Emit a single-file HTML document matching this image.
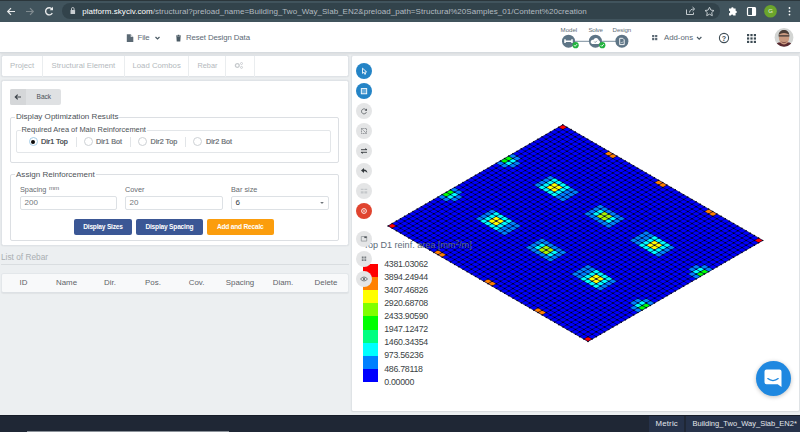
<!DOCTYPE html>
<html><head><meta charset="utf-8"><title>SkyCiv</title>
<style>
*{box-sizing:border-box;margin:0;padding:0}
html,body{width:800px;height:432px;overflow:hidden;background:#eceff1;font-family:"Liberation Sans",sans-serif;}
.a{position:absolute}
.t{position:absolute;white-space:nowrap;line-height:1}
#chrome{left:0;top:0;width:800px;height:22px;background:#41545d}
#chrometop{left:0;top:0;width:800px;height:1.3px;background:#2b363b}
#urlbar{left:62px;top:2.8px;width:658px;height:16.4px;border-radius:8.2px;background:#32434b}
#hdr{left:0;top:21.6px;width:800px;height:31.2px;background:#fff;border-bottom:1px solid #d6dbdf;box-shadow:0 1px 2px rgba(0,0,0,.09)}
.card{background:#fff;border:1px solid #dfe3e7;border-radius:2.5px;box-shadow:0 0 1.5px rgba(0,0,0,.10)}
.tab{color:#b4b9bd;font-size:7.75px;top:62px}
.sep{width:1px;top:55.5px;height:21px;background:#eaedef}
.fs{border:1px solid #dcdfe3;border-radius:2px}
.lg{background:#fff;color:#4d5257;font-size:8.05px;padding:0 1px}
.rad{width:9px;height:9px;border:1px solid #cdd1d5;border-radius:50%;background:#fff}
.rl{font-size:7.2px;color:#666b70;top:138px;-webkit-text-stroke:.2px #666b70}
.inp{height:14px;border:1px solid #dde1e5;border-radius:2px;background:#fff;top:195.5px;width:97px}
.lbl{font-size:7.3px;color:#666b70;top:186px}
.val{font-size:8px;color:#72777c;top:199px}
.btn{top:219px;height:16px;border-radius:2px;color:#fff;font-size:6.6px;font-weight:bold;text-align:center;line-height:16.5px;letter-spacing:-0.2px}
.th{font-size:7.9px;color:#5f6469;top:279.3px;transform:translateX(-50%)}
.ic{left:355.7px;width:16px;height:16px;border-radius:50%;background:#e4e5e6}
.lv{font-size:8.8px;letter-spacing:-.27px;color:#3a3f44;left:384.2px}
</style></head><body>

<!-- browser chrome -->
<div class="a" id="chrome"></div>
<div class="a" id="chrometop"></div>
<div class="a" id="urlbar"></div>
<svg class="a" style="left:0;top:0" width="800" height="21" viewBox="0 0 800 21">
 <g fill="none" stroke="#e8eaeb" stroke-width="1.2">
  <path d="M15 11.5H8M11 8.2L7.7 11.5L11 14.8"/>
  <path d="M26 11.5H33M30 8.2L33.3 11.5L30 14.8" stroke="#7f8a8f"/>
  <path d="M52 9A3.6 3.6 0 1 0 52.3 13.2" stroke-width="1.4"/>
 </g>
 <path d="M53 6.8V10.2H49.6Z" fill="#e8eaeb"/>
 <rect x="70.5" y="10" width="4.6" height="4" rx=".6" fill="#c9ced1"/>
 <path d="M71.5 10V8.8a1.3 1.3 0 0 1 2.6 0V10" fill="none" stroke="#c9ced1" stroke-width=".9"/>
 <!-- right icons -->
 <g fill="none" stroke="#c3cbcf" stroke-width="1">
  <path d="M686.5 9.5V14.5H693.5V12.5M689.5 12.5C689.8 10 691.5 9 694 9M692.5 7L694.7 9L692.5 11"/>
  <path d="M709.5 7.2L710.9 10.1L714 10.5L711.7 12.6L712.3 15.7L709.5 14.2L706.7 15.7L707.3 12.6L705 10.5L708.1 10.1Z"/>
 </g>
 <path d="M729 8.5h2.2a1.2 1.2 0 0 1 2.4 0h2v2.2a1.2 1.2 0 0 1 0 2.4v2.4h-2.4a1.1 1.1 0 0 0-2.2 0H729v-2.3a1.2 1.2 0 0 0 0-2.4Z" fill="#fff"/>
 <rect x="747.5" y="7.5" width="8" height="8" rx="1" fill="none" stroke="#fff" stroke-width="1.2"/>
 <rect x="752" y="7.5" width="3.5" height="8" fill="#fff"/>
 <circle cx="770.5" cy="11.2" r="6.3" fill="#6ba52c"/>
 <text x="770.5" y="13.3" font-family="Liberation Sans" font-size="6" fill="#e6f0dc" text-anchor="middle">G</text>
 <circle cx="789.5" cy="8" r=".9" fill="#fff"/><circle cx="789.5" cy="11.3" r=".9" fill="#fff"/><circle cx="789.5" cy="14.6" r=".9" fill="#fff"/>
</svg>
<div class="t" style="left:82.3px;top:7.5px;font-size:8px;color:#b2bbc0;letter-spacing:.04px"><span style="color:#fff">platform.skyciv.com</span>/structural?preload_name=Building_Two_Way_Slab_EN2&amp;preload_path=Structural%20Samples_01/Content%20creation</div>

<!-- app header -->
<div class="a" id="hdr"></div>
<svg class="a" style="left:0;top:21px" width="800" height="31" viewBox="0 21 800 31">
 <!-- file icon -->
 <path d="M126.800 34.300h3.900l2.600 2.600v5h-6.500Z" fill="#5b6974"/><path d="M130.700 34.300v2.600h2.600Z" fill="#fff" opacity=".75"/>
 <path d="M155.5 37l2 2 2-2" fill="none" stroke="#4a5a64" stroke-width="1.2"/>
 <!-- trash -->
 <path d="M176 35.5h5v.9h-5zM177.7 34.7h1.6v.8h-1.6zM176.4 36.8h4.2l-.3 4.6h-3.6z" fill="#4a5a64"/>
 <!-- model / solve / design -->
 <path d="M569 41.300h53" stroke="#6b8091" stroke-width=".9"/>
 <circle cx="568.500" cy="41.200" r="6.500" fill="#5e7586"/><circle cx="595.400" cy="41.200" r="6.500" fill="#5e7586"/><circle cx="621.900" cy="41.200" r="6.500" fill="#5e7586"/>
 <path d="M565 39.300v3.800M572 39.300v3.800M565 41.200h7" stroke="#fff" stroke-width="1.500" fill="none"/>
 <path d="M592.200 44h6.200a1.900 1.900 0 0 0 .3-3.700a2.700 2.700 0 0 0-5.200-.5a2.100 2.100 0 0 0-1.300 4.200Z" fill="#fff"/>
 <path d="M594.300 41.600l.9.900 1.700-1.700" stroke="#5e7586" stroke-width=".7" fill="none"/>
 <path d="M619.700 38.300h3l1.500 1.500v4.800h-4.500Z" fill="none" stroke="#fff" stroke-width=".9"/>
 <path d="M621 42.300l.7.700 1.300-1.500" stroke="#fff" stroke-width=".6" fill="none"/>
 <circle cx="575.600" cy="45.200" r="3.100" fill="#22b33f"/><circle cx="602.300" cy="45.200" r="3.100" fill="#22b33f"/>
 <path d="M574 45.200l1.100 1.100 2-2.200M600.700 45.200l1.100 1.100 2-2.200" stroke="#fff" stroke-width=".9" fill="none"/>
 <!-- addons squares -->
 <g fill="#5b6974"><rect x="652.100" y="35" width="2.200" height="2.200"/><rect x="655.100" y="35" width="2.200" height="2.200"/><rect x="652.100" y="38" width="2.200" height="2.200"/><rect x="655.100" y="38" width="2.200" height="2.200"/></g>
 <path d="M697 37l2.2 2.2 2.2-2.2" fill="none" stroke="#4a5a64" stroke-width="1.2"/>
 <circle cx="724" cy="38" r="4.6" fill="none" stroke="#3e4c55" stroke-width="1.1"/>
 <text x="724" y="40.6" font-family="Liberation Sans" font-size="7.2" font-weight="bold" fill="#3e4c55" text-anchor="middle">?</text>
 <g fill="#3e4c55">
  <rect x="747" y="34" width="2.2" height="2.2"/><rect x="750.4" y="34" width="2.2" height="2.2"/><rect x="753.8" y="34" width="2.2" height="2.2"/>
  <rect x="747" y="37.4" width="2.2" height="2.2"/><rect x="750.4" y="37.4" width="2.2" height="2.2"/><rect x="753.8" y="37.4" width="2.2" height="2.2"/>
  <rect x="747" y="40.8" width="2.2" height="2.2"/><rect x="750.4" y="40.8" width="2.2" height="2.2"/><rect x="753.8" y="40.8" width="2.2" height="2.2"/>
 </g>
 <!-- avatar -->
 <clipPath id="av"><circle cx="784" cy="37.4" r="9.4"/></clipPath>
 <g clip-path="url(#av)">
  <rect x="774" y="27" width="20" height="21" fill="#d3d5d3"/>
  <path d="M774 48c.5-4.500 4-5.500 6-5.800h8c2 .3 5.500 1.300 6 5.800Z" fill="#5a2a30"/>
  <ellipse cx="784" cy="37.600" rx="5.200" ry="7" fill="#c9997f"/>
  <path d="M778.700 35.500c-.6-7.500 11.200-7.500 10.600 0c-.8-3.400-9.800-3.400-10.600 0Z" fill="#4b3d36"/>
  <path d="M781.300 41.200c1.500 1.400 4 1.400 5.400 0c-.3 2.400-5.100 2.400-5.400 0Z" fill="#7e4a44"/>
  <path d="M778.600 35.800h10.800" stroke="#3b3432" stroke-width="1.300"/>
 </g>
</svg>
<div class="t" style="left:137.6px;top:34px;font-size:7.8px;letter-spacing:-.15px;color:#5b6974">File</div>
<div class="t" style="left:186px;top:34px;font-size:7.8px;letter-spacing:-.09px;color:#5b6974">Reset Design Data</div>
<div class="t" style="left:560.6px;top:26.9px;font-size:6.1px;color:#5d6b75">Model</div>
<div class="t" style="left:588.4px;top:26.9px;font-size:6.1px;letter-spacing:-.2px;color:#5d6b75">Solve</div>
<div class="t" style="left:612.6px;top:26.9px;font-size:6.1px;letter-spacing:-.1px;color:#5d6b75">Design</div>
<div class="t" style="left:664px;top:34px;font-size:7.8px;color:#5b6974">Add-ons</div>

<!-- left panel: tabs -->
<div class="a card" style="left:1.2px;top:54.5px;width:347.4px;height:22.8px"></div>
<div class="t tab" style="left:10px">Project</div>
<div class="t tab" style="left:51.5px">Structural Element</div>
<div class="t tab" style="left:132.5px">Load Combos</div>
<div class="t tab" style="left:197.5px;font-size:7.3px;top:62.3px">Rebar</div>
<div class="a sep" style="left:42px"></div><div class="a sep" style="left:124px"></div><div class="a sep" style="left:188px"></div><div class="a sep" style="left:224.9px"></div><div class="a sep" style="left:254px"></div>
<svg class="a" style="left:234px;top:61px" width="12" height="10" viewBox="0 0 12 10">
 <circle cx="3.300" cy="4.500" r="1.900" fill="none" stroke="#c6cacd" stroke-width="1.300"/>
 <circle cx="7.500" cy="2.500" r="1" fill="none" stroke="#c6cacd" stroke-width=".9"/>
 <circle cx="7.500" cy="6.400" r="1" fill="none" stroke="#c6cacd" stroke-width=".9"/>
</svg>

<!-- main card -->
<div class="a card" style="left:1.2px;top:80px;width:347.4px;height:165.7px"></div>
<div class="a" style="left:10px;top:89px;width:50.5px;height:16px;background:#dfe1e3;border-radius:2px"></div>
<div class="a" style="left:10px;top:89px;width:16px;height:16px;background:#d5d7d9;border-radius:2px 0 0 2px"></div>
<svg class="a" style="left:14px;top:93px" width="8" height="8" viewBox="0 0 8 8"><path d="M7 4H1.5M3.7 1.6L1.3 4L3.7 6.4" fill="none" stroke="#3e454b" stroke-width="1.2"/></svg>
<div class="t" style="left:36.5px;top:94.2px;font-size:6.6px;color:#4c5257">Back</div>

<div class="a fs" style="left:10px;top:117.1px;width:328.5px;height:46.4px"></div>
<div class="t lg" style="left:15px;top:113px">Display Optimization Results</div>
<div class="a fs" style="left:16.2px;top:130px;width:315.3px;height:22.6px;border-color:#e3e6e9"></div>
<div class="t lg" style="left:20.5px;top:125.8px;font-size:7.45px">Required Area of Main Reinforcement</div>
<div class="a rad" style="left:28.7px;top:137px;border-color:#a5cde8"></div><div class="a" style="left:31.2px;top:139.5px;width:4px;height:4px;border-radius:50%;background:#0a0a0a"></div>
<div class="a rad" style="left:83.6px;top:137px"></div>
<div class="a rad" style="left:137.8px;top:137px"></div>
<div class="a rad" style="left:193px;top:137px"></div>
<div class="t rl" style="left:41px;color:#33383c;-webkit-text-stroke:.2px #33383c">Dir1 Top</div>
<div class="t rl" style="left:96px">Dir1 Bot</div>
<div class="t rl" style="left:150.5px">Dir2 Top</div>
<div class="t rl" style="left:206px">Dir2 Bot</div>
<div class="a" style="left:76px;top:136.5px;width:1px;height:10px;background:#e2e5e8"></div>
<div class="a" style="left:130px;top:136.5px;width:1px;height:10px;background:#e2e5e8"></div>
<div class="a" style="left:185px;top:136.5px;width:1px;height:10px;background:#e2e5e8"></div>

<div class="a fs" style="left:10px;top:173.7px;width:328.5px;height:67.8px"></div>
<div class="t lg" style="left:15px;top:170.6px">Assign Reinforcement</div>
<div class="t lbl" style="left:20px">Spacing <span style="font-size:6.2px;position:relative;top:-1.7px;left:.5px">mm</span></div>
<div class="t lbl" style="left:125px">Cover</div>
<div class="t lbl" style="left:231px">Bar size</div>
<div class="a inp" style="left:20px"></div><div class="a inp" style="left:125.3px;width:97.5px"></div><div class="a inp" style="left:231.2px;width:97.5px"></div>
<div class="t val" style="left:24.5px">200</div>
<div class="t val" style="left:129.5px">20</div>
<div class="t val" style="left:235.5px;color:#33383c">6</div>
<svg class="a" style="left:319px;top:201px" width="6" height="4" viewBox="0 0 6 4"><path d="M1.2 1h3.6L3 3Z" fill="#6d7378"/></svg>
<div class="a btn" style="left:73.6px;width:58.8px;background:#3b5795">Display Sizes</div>
<div class="a btn" style="left:136.1px;width:66.6px;background:#3b5795">Display Spacing</div>
<div class="a btn" style="left:207px;width:66.5px;background:#fb9d0d">Add and Recalc</div>

<!-- list of rebar -->
<div class="t" style="left:1px;top:253.2px;font-size:8.3px;color:#a9aeb2">List of Rebar</div>
<div class="a" style="left:1px;top:264px;width:348px;height:1px;background:#d9dde0"></div>
<div class="a" style="left:1.2px;top:273.4px;width:347.8px;height:19.6px;background:#f8f9fa;border:1px solid #e3e7ea;border-bottom-color:#dde1e5;border-radius:2.5px;box-shadow:0 1px 1px rgba(0,0,0,.05)"></div>
<div class="t th" style="left:23.5px">ID</div>
<div class="t th" style="left:66.5px">Name</div>
<div class="t th" style="left:110px">Dir.</div>
<div class="t th" style="left:153px">Pos.</div>
<div class="t th" style="left:196.5px">Cov.</div>
<div class="t th" style="left:240px">Spacing</div>
<div class="t th" style="left:283px">Diam.</div>
<div class="t th" style="left:326px">Delete</div>

<!-- right canvas -->
<div class="a" style="left:351.3px;top:54.5px;width:448.6px;height:357.6px;background:#fff;border:1px solid #dfe3e6;border-top-color:#e4e7ea;border-bottom-color:#d9dcdf;border-radius:2.5px;box-shadow:0 0 1.5px rgba(0,0,0,.08)"></div>
<svg style="position:absolute;left:0;top:0" width="800" height="432" viewBox="0 0 800 432">
<polygon points="388.0,225.9 562.8,124.8 762.8,240.4 588.0,341.5" fill="#0000ff"/>
<polygon points="475.4,218.7 479.6,216.3 483.8,218.7 479.6,221.1" fill="#0080ff"/>
<polygon points="479.6,221.1 483.8,218.7 487.9,221.1 483.8,223.5" fill="#00ffff"/>
<polygon points="483.8,223.5 487.9,221.1 492.1,223.5 487.9,225.9" fill="#00ffff"/>
<polygon points="487.9,225.9 492.1,223.5 496.3,225.9 492.1,228.3" fill="#00ffff"/>
<polygon points="492.1,228.3 496.3,225.9 500.4,228.3 496.3,230.7" fill="#00ffff"/>
<polygon points="496.3,230.7 500.4,228.3 504.6,230.7 500.4,233.1" fill="#0080ff"/>
<polygon points="500.4,233.1 504.6,230.7 508.8,233.1 504.6,235.5" fill="#0080ff"/>
<polygon points="479.6,216.3 483.8,213.9 487.9,216.3 483.8,218.7" fill="#0080ff"/>
<polygon points="483.8,218.7 487.9,216.3 492.1,218.7 487.9,221.1" fill="#00ffff"/>
<polygon points="487.9,221.1 492.1,218.7 496.3,221.1 492.1,223.5" fill="#ffff00"/>
<polygon points="492.1,223.5 496.3,221.1 500.4,223.5 496.3,225.9" fill="#ffff00"/>
<polygon points="496.3,225.9 500.4,223.5 504.6,225.9 500.4,228.3" fill="#00ffff"/>
<polygon points="500.4,228.3 504.6,225.9 508.8,228.3 504.6,230.7" fill="#0080ff"/>
<polygon points="504.6,230.7 508.8,228.3 512.9,230.7 508.8,233.1" fill="#0080ff"/>
<polygon points="483.8,213.9 487.9,211.5 492.1,213.9 487.9,216.3" fill="#0080ff"/>
<polygon points="487.9,216.3 492.1,213.9 496.3,216.3 492.1,218.7" fill="#00ffff"/>
<polygon points="492.1,218.7 496.3,216.3 500.4,218.7 496.3,221.1" fill="#ffff00"/>
<polygon points="496.3,221.1 500.4,218.7 504.6,221.1 500.4,223.5" fill="#ffff00"/>
<polygon points="500.4,223.5 504.6,221.1 508.8,223.5 504.6,225.9" fill="#00ffff"/>
<polygon points="504.6,225.9 508.8,223.5 512.9,225.9 508.8,228.3" fill="#0080ff"/>
<polygon points="508.8,228.3 512.9,225.9 517.1,228.3 512.9,230.7" fill="#0080ff"/>
<polygon points="487.9,211.5 492.1,209.1 496.3,211.5 492.1,213.9" fill="#0080ff"/>
<polygon points="492.1,213.9 496.3,211.5 500.4,213.9 496.3,216.3" fill="#00ffff"/>
<polygon points="496.3,216.3 500.4,213.9 504.6,216.3 500.4,218.7" fill="#00ffff"/>
<polygon points="500.4,218.7 504.6,216.3 508.8,218.7 504.6,221.1" fill="#00ffff"/>
<polygon points="504.6,221.1 508.8,218.7 512.9,221.1 508.8,223.5" fill="#00ffff"/>
<polygon points="508.8,223.5 512.9,221.1 517.1,223.5 512.9,225.9" fill="#0080ff"/>
<polygon points="512.9,225.9 517.1,223.5 521.3,225.9 517.1,228.3" fill="#0080ff"/>
<polygon points="525.4,247.6 529.6,245.2 533.8,247.6 529.6,250.0" fill="#0080ff"/>
<polygon points="529.6,250.0 533.8,247.6 537.9,250.0 533.8,252.4" fill="#0080ff"/>
<polygon points="533.8,252.4 537.9,250.0 542.1,252.4 537.9,254.8" fill="#0080ff"/>
<polygon points="537.9,254.8 542.1,252.4 546.3,254.8 542.1,257.2" fill="#0080ff"/>
<polygon points="542.1,257.2 546.3,254.8 550.4,257.2 546.3,259.6" fill="#0080ff"/>
<polygon points="546.3,259.6 550.4,257.2 554.6,259.6 550.4,262.0" fill="#0080ff"/>
<polygon points="529.6,245.2 533.8,242.8 537.9,245.2 533.8,247.6" fill="#0080ff"/>
<polygon points="533.8,247.6 537.9,245.2 542.1,247.6 537.9,250.0" fill="#00ffff"/>
<polygon points="537.9,250.0 542.1,247.6 546.3,250.0 542.1,252.4" fill="#a8f400"/>
<polygon points="542.1,252.4 546.3,250.0 550.4,252.4 546.3,254.8" fill="#a8f400"/>
<polygon points="546.3,254.8 550.4,252.4 554.6,254.8 550.4,257.2" fill="#00ffff"/>
<polygon points="550.4,257.2 554.6,254.8 558.8,257.2 554.6,259.6" fill="#0080ff"/>
<polygon points="533.8,242.8 537.9,240.4 542.1,242.8 537.9,245.2" fill="#0080ff"/>
<polygon points="537.9,245.2 542.1,242.8 546.3,245.2 542.1,247.6" fill="#00ffff"/>
<polygon points="542.1,247.6 546.3,245.2 550.4,247.6 546.3,250.0" fill="#a8f400"/>
<polygon points="546.3,250.0 550.4,247.6 554.6,250.0 550.4,252.4" fill="#a8f400"/>
<polygon points="550.4,252.4 554.6,250.0 558.8,252.4 554.6,254.8" fill="#00ffff"/>
<polygon points="554.6,254.8 558.8,252.4 562.9,254.8 558.8,257.2" fill="#0080ff"/>
<polygon points="537.9,240.4 542.1,238.0 546.3,240.4 542.1,242.8" fill="#0080ff"/>
<polygon points="542.1,242.8 546.3,240.4 550.4,242.8 546.3,245.2" fill="#0080ff"/>
<polygon points="546.3,245.2 550.4,242.8 554.6,245.2 550.4,247.6" fill="#0080ff"/>
<polygon points="550.4,247.6 554.6,245.2 558.8,247.6 554.6,250.0" fill="#0080ff"/>
<polygon points="554.6,250.0 558.8,247.6 562.9,250.0 558.8,252.4" fill="#0080ff"/>
<polygon points="558.8,252.4 562.9,250.0 567.1,252.4 562.9,254.8" fill="#0080ff"/>
<polygon points="571.3,274.1 575.4,271.7 579.6,274.1 575.4,276.5" fill="#0080ff"/>
<polygon points="575.4,276.5 579.6,274.1 583.8,276.5 579.6,278.9" fill="#0080ff"/>
<polygon points="579.6,278.9 583.8,276.5 587.9,278.9 583.8,281.3" fill="#00ffff"/>
<polygon points="583.8,281.3 587.9,278.9 592.1,281.3 587.9,283.7" fill="#00ffff"/>
<polygon points="587.9,283.7 592.1,281.3 596.3,283.7 592.1,286.1" fill="#00ffff"/>
<polygon points="592.1,286.1 596.3,283.7 600.4,286.1 596.3,288.5" fill="#00ffff"/>
<polygon points="596.3,288.5 600.4,286.1 604.6,288.5 600.4,290.9" fill="#0080ff"/>
<polygon points="575.4,271.7 579.6,269.3 583.8,271.7 579.6,274.1" fill="#0080ff"/>
<polygon points="579.6,274.1 583.8,271.7 587.9,274.1 583.8,276.5" fill="#0080ff"/>
<polygon points="583.8,276.5 587.9,274.1 592.1,276.5 587.9,278.9" fill="#00ffff"/>
<polygon points="587.9,278.9 592.1,276.5 596.3,278.9 592.1,281.3" fill="#ffff00"/>
<polygon points="592.1,281.3 596.3,278.9 600.4,281.3 596.3,283.7" fill="#ffff00"/>
<polygon points="596.3,283.7 600.4,281.3 604.6,283.7 600.4,286.1" fill="#00ffff"/>
<polygon points="600.4,286.1 604.6,283.7 608.8,286.1 604.6,288.5" fill="#0080ff"/>
<polygon points="579.6,269.3 583.8,266.9 587.9,269.3 583.8,271.7" fill="#0080ff"/>
<polygon points="583.8,271.7 587.9,269.3 592.1,271.7 587.9,274.1" fill="#0080ff"/>
<polygon points="587.9,274.1 592.1,271.7 596.3,274.1 592.1,276.5" fill="#00ffff"/>
<polygon points="592.1,276.5 596.3,274.1 600.4,276.5 596.3,278.9" fill="#ffff00"/>
<polygon points="596.3,278.9 600.4,276.5 604.6,278.9 600.4,281.3" fill="#ffff00"/>
<polygon points="600.4,281.3 604.6,278.9 608.8,281.3 604.6,283.7" fill="#00ffff"/>
<polygon points="604.6,283.7 608.8,281.3 612.9,283.7 608.8,286.1" fill="#0080ff"/>
<polygon points="583.8,266.9 587.9,264.5 592.1,266.9 587.9,269.3" fill="#0080ff"/>
<polygon points="587.9,269.3 592.1,266.9 596.3,269.3 592.1,271.7" fill="#0080ff"/>
<polygon points="592.1,271.7 596.3,269.3 600.4,271.7 596.3,274.1" fill="#00ffff"/>
<polygon points="596.3,274.1 600.4,271.7 604.6,274.1 600.4,276.5" fill="#00ffff"/>
<polygon points="600.4,276.5 604.6,274.1 608.8,276.5 604.6,278.9" fill="#00ffff"/>
<polygon points="604.6,278.9 608.8,276.5 612.9,278.9 608.8,281.3" fill="#00ffff"/>
<polygon points="608.8,281.3 612.9,278.9 617.1,281.3 612.9,283.7" fill="#0080ff"/>
<polygon points="533.7,185.0 537.9,182.6 542.0,185.0 537.9,187.4" fill="#0080ff"/>
<polygon points="537.9,187.4 542.0,185.0 546.2,187.4 542.0,189.8" fill="#00ffff"/>
<polygon points="542.0,189.8 546.2,187.4 550.4,189.8 546.2,192.2" fill="#00ffff"/>
<polygon points="546.2,192.2 550.4,189.8 554.5,192.2 550.4,194.6" fill="#00ffff"/>
<polygon points="550.4,194.6 554.5,192.2 558.7,194.6 554.5,197.0" fill="#00ffff"/>
<polygon points="554.5,197.0 558.7,194.6 562.9,197.0 558.7,199.4" fill="#0080ff"/>
<polygon points="558.7,199.4 562.9,197.0 567.0,199.4 562.9,201.8" fill="#0080ff"/>
<polygon points="537.9,182.6 542.0,180.2 546.2,182.6 542.0,185.0" fill="#0080ff"/>
<polygon points="542.0,185.0 546.2,182.6 550.4,185.0 546.2,187.4" fill="#00ffff"/>
<polygon points="546.2,187.4 550.4,185.0 554.5,187.4 550.4,189.8" fill="#ffff00"/>
<polygon points="550.4,189.8 554.5,187.4 558.7,189.8 554.5,192.2" fill="#ffff00"/>
<polygon points="554.5,192.2 558.7,189.8 562.9,192.2 558.7,194.6" fill="#00ffff"/>
<polygon points="558.7,194.6 562.9,192.2 567.0,194.6 562.9,197.0" fill="#0080ff"/>
<polygon points="562.9,197.0 567.0,194.6 571.2,197.0 567.0,199.4" fill="#0080ff"/>
<polygon points="542.0,180.2 546.2,177.8 550.4,180.2 546.2,182.6" fill="#0080ff"/>
<polygon points="546.2,182.6 550.4,180.2 554.5,182.6 550.4,185.0" fill="#00ffff"/>
<polygon points="550.4,185.0 554.5,182.6 558.7,185.0 554.5,187.4" fill="#ffff00"/>
<polygon points="554.5,187.4 558.7,185.0 562.9,187.4 558.7,189.8" fill="#ffff00"/>
<polygon points="558.7,189.8 562.9,187.4 567.0,189.8 562.9,192.2" fill="#00ffff"/>
<polygon points="562.9,192.2 567.0,189.8 571.2,192.2 567.0,194.6" fill="#0080ff"/>
<polygon points="567.0,194.6 571.2,192.2 575.4,194.6 571.2,197.0" fill="#0080ff"/>
<polygon points="546.2,177.8 550.4,175.4 554.5,177.8 550.4,180.2" fill="#0080ff"/>
<polygon points="550.4,180.2 554.5,177.8 558.7,180.2 554.5,182.6" fill="#00ffff"/>
<polygon points="554.5,182.6 558.7,180.2 562.9,182.6 558.7,185.0" fill="#00ffff"/>
<polygon points="558.7,185.0 562.9,182.6 567.0,185.0 562.9,187.4" fill="#00ffff"/>
<polygon points="562.9,187.4 567.0,185.0 571.2,187.4 567.0,189.8" fill="#00ffff"/>
<polygon points="567.0,189.8 571.2,187.4 575.4,189.8 571.2,192.2" fill="#0080ff"/>
<polygon points="571.2,192.2 575.4,189.8 579.5,192.2 575.4,194.6" fill="#0080ff"/>
<polygon points="583.7,213.9 587.9,211.5 592.0,213.9 587.9,216.3" fill="#0080ff"/>
<polygon points="587.9,216.3 592.0,213.9 596.2,216.3 592.0,218.7" fill="#0080ff"/>
<polygon points="592.0,218.7 596.2,216.3 600.4,218.7 596.2,221.1" fill="#0080ff"/>
<polygon points="596.2,221.1 600.4,218.7 604.5,221.1 600.4,223.5" fill="#0080ff"/>
<polygon points="600.4,223.5 604.5,221.1 608.7,223.5 604.5,225.9" fill="#0080ff"/>
<polygon points="604.5,225.9 608.7,223.5 612.9,225.9 608.7,228.3" fill="#0080ff"/>
<polygon points="587.9,211.5 592.0,209.1 596.2,211.5 592.0,213.9" fill="#0080ff"/>
<polygon points="592.0,213.9 596.2,211.5 600.4,213.9 596.2,216.3" fill="#00ffff"/>
<polygon points="596.2,216.3 600.4,213.9 604.5,216.3 600.4,218.7" fill="#a8f400"/>
<polygon points="600.4,218.7 604.5,216.3 608.7,218.7 604.5,221.1" fill="#a8f400"/>
<polygon points="604.5,221.1 608.7,218.7 612.9,221.1 608.7,223.5" fill="#00ffff"/>
<polygon points="608.7,223.5 612.9,221.1 617.0,223.5 612.9,225.9" fill="#0080ff"/>
<polygon points="592.0,209.1 596.2,206.7 600.4,209.1 596.2,211.5" fill="#0080ff"/>
<polygon points="596.2,211.5 600.4,209.1 604.5,211.5 600.4,213.9" fill="#00ffff"/>
<polygon points="600.4,213.9 604.5,211.5 608.7,213.9 604.5,216.3" fill="#a8f400"/>
<polygon points="604.5,216.3 608.7,213.9 612.9,216.3 608.7,218.7" fill="#a8f400"/>
<polygon points="608.7,218.7 612.9,216.3 617.0,218.7 612.9,221.1" fill="#00ffff"/>
<polygon points="612.9,221.1 617.0,218.7 621.2,221.1 617.0,223.5" fill="#0080ff"/>
<polygon points="596.2,206.7 600.4,204.3 604.5,206.7 600.4,209.1" fill="#0080ff"/>
<polygon points="600.4,209.1 604.5,206.7 608.7,209.1 604.5,211.5" fill="#0080ff"/>
<polygon points="604.5,211.5 608.7,209.1 612.9,211.5 608.7,213.9" fill="#0080ff"/>
<polygon points="608.7,213.9 612.9,211.5 617.0,213.9 612.9,216.3" fill="#0080ff"/>
<polygon points="612.9,216.3 617.0,213.9 621.2,216.3 617.0,218.7" fill="#0080ff"/>
<polygon points="617.0,218.7 621.2,216.3 625.4,218.7 621.2,221.1" fill="#0080ff"/>
<polygon points="629.5,240.4 633.7,238.0 637.9,240.4 633.7,242.8" fill="#0080ff"/>
<polygon points="633.7,242.8 637.9,240.4 642.0,242.8 637.9,245.2" fill="#0080ff"/>
<polygon points="637.9,245.2 642.0,242.8 646.2,245.2 642.0,247.6" fill="#00ffff"/>
<polygon points="642.0,247.6 646.2,245.2 650.4,247.6 646.2,250.0" fill="#00ffff"/>
<polygon points="646.2,250.0 650.4,247.6 654.5,250.0 650.4,252.4" fill="#00ffff"/>
<polygon points="650.4,252.4 654.5,250.0 658.7,252.4 654.5,254.8" fill="#00ffff"/>
<polygon points="654.5,254.8 658.7,252.4 662.9,254.8 658.7,257.2" fill="#0080ff"/>
<polygon points="633.7,238.0 637.9,235.6 642.0,238.0 637.9,240.4" fill="#0080ff"/>
<polygon points="637.9,240.4 642.0,238.0 646.2,240.4 642.0,242.8" fill="#0080ff"/>
<polygon points="642.0,242.8 646.2,240.4 650.4,242.8 646.2,245.2" fill="#00ffff"/>
<polygon points="646.2,245.2 650.4,242.8 654.5,245.2 650.4,247.6" fill="#ffff00"/>
<polygon points="650.4,247.6 654.5,245.2 658.7,247.6 654.5,250.0" fill="#ffff00"/>
<polygon points="654.5,250.0 658.7,247.6 662.9,250.0 658.7,252.4" fill="#00ffff"/>
<polygon points="658.7,252.4 662.9,250.0 667.0,252.4 662.9,254.8" fill="#0080ff"/>
<polygon points="637.9,235.6 642.0,233.2 646.2,235.6 642.0,238.0" fill="#0080ff"/>
<polygon points="642.0,238.0 646.2,235.6 650.4,238.0 646.2,240.4" fill="#0080ff"/>
<polygon points="646.2,240.4 650.4,238.0 654.5,240.4 650.4,242.8" fill="#00ffff"/>
<polygon points="650.4,242.8 654.5,240.4 658.7,242.8 654.5,245.2" fill="#ffff00"/>
<polygon points="654.5,245.2 658.7,242.8 662.9,245.2 658.7,247.6" fill="#ffff00"/>
<polygon points="658.7,247.6 662.9,245.2 667.0,247.6 662.9,250.0" fill="#00ffff"/>
<polygon points="662.9,250.0 667.0,247.6 671.2,250.0 667.0,252.4" fill="#0080ff"/>
<polygon points="642.0,233.2 646.2,230.8 650.4,233.2 646.2,235.6" fill="#0080ff"/>
<polygon points="646.2,235.6 650.4,233.2 654.5,235.6 650.4,238.0" fill="#0080ff"/>
<polygon points="650.4,238.0 654.5,235.6 658.7,238.0 654.5,240.4" fill="#00ffff"/>
<polygon points="654.5,240.4 658.7,238.0 662.9,240.4 658.7,242.8" fill="#00ffff"/>
<polygon points="658.7,242.8 662.9,240.4 667.0,242.8 662.9,245.2" fill="#00ffff"/>
<polygon points="662.9,245.2 667.0,242.8 671.2,245.2 667.0,247.6" fill="#00ffff"/>
<polygon points="667.0,247.6 671.2,245.2 675.4,247.6 671.2,250.0" fill="#0080ff"/>
<polygon points="437.9,197.0 442.1,194.6 446.3,197.0 442.1,199.4" fill="#0080ff"/>
<polygon points="442.1,199.4 446.3,197.0 450.4,199.4 446.3,201.8" fill="#0080ff"/>
<polygon points="442.1,194.6 446.3,192.2 450.4,194.6 446.3,197.0" fill="#00ff00"/>
<polygon points="446.3,197.0 450.4,194.6 454.6,197.0 450.4,199.4" fill="#00ffff"/>
<polygon points="450.4,199.4 454.6,197.0 458.8,199.4 454.6,201.8" fill="#0080ff"/>
<polygon points="446.3,192.2 450.4,189.8 454.6,192.2 450.4,194.6" fill="#00ff00"/>
<polygon points="450.4,194.6 454.6,192.2 458.8,194.6 454.6,197.0" fill="#00ffff"/>
<polygon points="454.6,197.0 458.8,194.6 462.9,197.0 458.8,199.4" fill="#0080ff"/>
<polygon points="450.4,189.8 454.6,187.4 458.8,189.8 454.6,192.2" fill="#0080ff"/>
<polygon points="454.6,192.2 458.8,189.8 462.9,192.2 458.8,194.6" fill="#0080ff"/>
<polygon points="633.8,310.2 637.9,307.8 642.1,310.2 637.9,312.6" fill="#0080ff"/>
<polygon points="629.6,307.8 633.8,305.4 637.9,307.8 633.8,310.2" fill="#0080ff"/>
<polygon points="637.9,307.8 642.1,305.4 646.3,307.8 642.1,310.2" fill="#00ff00"/>
<polygon points="633.8,305.4 637.9,303.0 642.1,305.4 637.9,307.8" fill="#00ffff"/>
<polygon points="629.6,303.0 633.8,300.6 637.9,303.0 633.8,305.4" fill="#0080ff"/>
<polygon points="642.1,305.4 646.3,303.0 650.4,305.4 646.3,307.8" fill="#00ff00"/>
<polygon points="637.9,303.0 642.1,300.6 646.3,303.0 642.1,305.4" fill="#00ffff"/>
<polygon points="633.8,300.6 637.9,298.2 642.1,300.6 637.9,303.0" fill="#0080ff"/>
<polygon points="646.3,303.0 650.4,300.6 654.6,303.0 650.4,305.4" fill="#0080ff"/>
<polygon points="642.1,300.6 646.3,298.2 650.4,300.6 646.3,303.0" fill="#0080ff"/>
<polygon points="496.2,163.3 500.4,160.9 504.5,163.3 500.4,165.7" fill="#0080ff"/>
<polygon points="500.4,165.7 504.5,163.3 508.7,165.7 504.5,168.1" fill="#0080ff"/>
<polygon points="500.4,160.9 504.5,158.5 508.7,160.9 504.5,163.3" fill="#00ff00"/>
<polygon points="504.5,163.3 508.7,160.9 512.9,163.3 508.7,165.7" fill="#00ffff"/>
<polygon points="508.7,165.7 512.9,163.3 517.0,165.7 512.9,168.1" fill="#0080ff"/>
<polygon points="504.5,158.5 508.7,156.1 512.9,158.5 508.7,160.9" fill="#00ff00"/>
<polygon points="508.7,160.9 512.9,158.5 517.0,160.9 512.9,163.3" fill="#00ffff"/>
<polygon points="512.9,163.3 517.0,160.9 521.2,163.3 517.0,165.7" fill="#0080ff"/>
<polygon points="508.7,156.1 512.9,153.7 517.0,156.1 512.9,158.5" fill="#0080ff"/>
<polygon points="512.9,158.5 517.0,156.1 521.2,158.5 517.0,160.9" fill="#0080ff"/>
<polygon points="692.0,276.5 696.2,274.1 700.4,276.5 696.2,278.9" fill="#0080ff"/>
<polygon points="687.9,274.1 692.0,271.7 696.2,274.1 692.0,276.5" fill="#0080ff"/>
<polygon points="696.2,274.1 700.4,271.7 704.5,274.1 700.4,276.5" fill="#00ff00"/>
<polygon points="692.0,271.7 696.2,269.3 700.4,271.7 696.2,274.1" fill="#00ffff"/>
<polygon points="687.9,269.3 692.0,266.9 696.2,269.3 692.0,271.7" fill="#0080ff"/>
<polygon points="700.4,271.7 704.5,269.3 708.7,271.7 704.5,274.1" fill="#00ff00"/>
<polygon points="696.2,269.3 700.4,266.9 704.5,269.3 700.4,271.7" fill="#00ffff"/>
<polygon points="692.0,266.9 696.2,264.5 700.4,266.9 696.2,269.3" fill="#0080ff"/>
<polygon points="704.5,269.3 708.7,266.9 712.9,269.3 708.7,271.7" fill="#0080ff"/>
<polygon points="700.4,266.9 704.5,264.5 708.7,266.9 704.5,269.3" fill="#0080ff"/>
<polygon points="433.8,252.4 438.0,250.0 442.2,252.4 438.0,254.8" fill="#ff8000"/>
<polygon points="438.0,254.8 442.2,252.4 446.3,254.8 442.2,257.2" fill="#ff8000"/>
<polygon points="604.5,153.7 608.6,151.3 612.8,153.7 608.6,156.1" fill="#ff8000"/>
<polygon points="608.6,156.1 612.8,153.7 617.0,156.1 612.8,158.5" fill="#ff8000"/>
<polygon points="483.8,281.3 488.0,278.9 492.2,281.3 488.0,283.7" fill="#ff8000"/>
<polygon points="488.0,283.7 492.2,281.3 496.3,283.7 492.2,286.1" fill="#ff8000"/>
<polygon points="654.5,182.6 658.6,180.2 662.8,182.6 658.6,185.0" fill="#ff8000"/>
<polygon points="658.6,185.0 662.8,182.6 667.0,185.0 662.8,187.4" fill="#ff8000"/>
<polygon points="533.8,310.2 538.0,307.8 542.2,310.2 538.0,312.6" fill="#ff8000"/>
<polygon points="538.0,312.6 542.2,310.2 546.3,312.6 542.2,315.0" fill="#ff8000"/>
<polygon points="704.5,211.5 708.6,209.1 712.8,211.5 708.6,213.9" fill="#ff8000"/>
<polygon points="708.6,213.9 712.8,211.5 717.0,213.9 712.8,216.3" fill="#ff8000"/>
<polygon points="388.0,225.9 392.2,223.5 396.3,225.9 392.2,228.3" fill="#ff0000"/>
<polygon points="558.6,127.2 562.8,124.8 567.0,127.2 562.8,129.6" fill="#ff0000"/>
<polygon points="583.8,339.1 588.0,336.7 592.2,339.1 588.0,341.5" fill="#ff0000"/>
<polygon points="754.5,240.4 758.6,238.0 762.8,240.4 758.6,242.8" fill="#ff0000"/>
<path d="M388.0 225.9L588.0 341.5M392.2 223.5L592.2 339.1M396.3 221.1L596.3 336.7M400.5 218.7L600.5 334.3M404.6 216.3L604.6 331.9M408.8 213.9L608.8 329.5M413.0 211.5L613.0 327.1M417.1 209.1L617.1 324.6M421.3 206.6L621.3 322.2M425.5 204.2L625.5 319.8M429.6 201.8L629.6 317.4M433.8 199.4L633.8 315.0M437.9 197.0L637.9 312.6M442.1 194.6L642.1 310.2M446.3 192.2L646.3 307.8M450.4 189.8L650.4 305.4M454.6 187.4L654.6 303.0M458.8 185.0L658.8 300.6M462.9 182.6L662.9 298.2M467.1 180.2L667.1 295.8M471.2 177.8L671.2 293.4M475.4 175.3L675.4 290.9M479.6 172.9L679.6 288.5M483.7 170.5L683.7 286.1M487.9 168.1L687.9 283.7M492.0 165.7L692.0 281.3M496.2 163.3L696.2 278.9M500.4 160.9L700.4 276.5M504.5 158.5L704.5 274.1M508.7 156.1L708.7 271.7M512.9 153.7L712.9 269.3M517.0 151.3L717.0 266.9M521.2 148.9L721.2 264.5M525.3 146.5L725.3 262.1M529.5 144.1L729.5 259.7M533.7 141.6L733.7 257.2M537.8 139.2L737.8 254.8M542.0 136.8L742.0 252.4M546.2 134.4L746.2 250.0M550.3 132.0L750.3 247.6M554.5 129.6L754.5 245.2M558.6 127.2L758.6 242.8M562.8 124.8L762.8 240.4M388.0 225.9L562.8 124.8M392.2 228.3L567.0 127.2M396.3 230.7L571.1 129.6M400.5 233.1L575.3 132.0M404.7 235.5L579.5 134.4M408.8 237.9L583.6 136.8M413.0 240.3L587.8 139.2M417.2 242.8L592.0 141.7M421.3 245.2L596.1 144.1M425.5 247.6L600.3 146.5M429.7 250.0L604.5 148.9M433.8 252.4L608.6 151.3M438.0 254.8L612.8 153.7M442.2 257.2L617.0 156.1M446.3 259.6L621.1 158.5M450.5 262.0L625.3 160.9M454.7 264.4L629.5 163.3M458.8 266.8L633.6 165.7M463.0 269.2L637.8 168.1M467.2 271.7L642.0 170.6M471.3 274.1L646.1 173.0M475.5 276.5L650.3 175.4M479.7 278.9L654.5 177.8M483.8 281.3L658.6 180.2M488.0 283.7L662.8 182.6M492.2 286.1L667.0 185.0M496.3 288.5L671.1 187.4M500.5 290.9L675.3 189.8M504.7 293.3L679.5 192.2M508.8 295.7L683.6 194.6M513.0 298.1L687.8 197.1M517.2 300.6L692.0 199.5M521.3 303.0L696.1 201.9M525.5 305.4L700.3 204.3M529.7 307.8L704.5 206.7M533.8 310.2L708.6 209.1M538.0 312.6L712.8 211.5M542.2 315.0L717.0 213.9M546.3 317.4L721.1 216.3M550.5 319.8L725.3 218.7M554.7 322.2L729.5 221.1M558.8 324.6L733.6 223.5M563.0 327.1L737.8 225.9M567.2 329.5L742.0 228.4M571.3 331.9L746.1 230.8M575.5 334.3L750.3 233.2M579.7 336.7L754.5 235.6M583.8 339.1L758.6 238.0M588.0 341.5L762.8 240.4" stroke="#000028" stroke-width="0.62" fill="none"/>
<path d="M388.00 225.90L588.04 341.52M392.16 223.49L592.20 339.12M396.32 221.09L596.37 336.71M400.49 218.68L600.53 334.30M404.65 216.27L604.69 331.90M408.81 213.86L608.85 329.49M412.97 211.46L613.01 327.08M417.13 209.05L617.17 324.67M421.30 206.64L621.34 322.27M425.46 204.24L625.50 319.86M429.62 201.83L629.66 317.45M433.78 199.42L633.82 315.05M437.94 197.01L637.98 312.64M442.10 194.61L642.15 310.23M446.27 192.20L646.31 307.82M450.43 189.79L650.47 305.42M454.59 187.39L654.63 303.01M458.75 184.98L658.79 300.60M462.91 182.57L662.96 298.20M467.08 180.16L667.12 295.79M471.24 177.76L671.28 293.38M475.40 175.35L675.44 290.97M479.56 172.94L679.60 288.57M483.72 170.54L683.77 286.16M487.89 168.13L687.93 283.75M492.05 165.72L692.09 281.35M496.21 163.31L696.25 278.94M500.37 160.91L700.41 276.53M504.53 158.50L704.58 274.12M508.70 156.09L708.74 271.72M512.86 153.69L712.90 269.31M517.02 151.28L717.06 266.90M521.18 148.87L721.22 264.50M525.34 146.46L725.38 262.09M529.50 144.06L729.55 259.68M533.67 141.65L733.71 257.27M537.83 139.24L737.87 254.87M541.99 136.84L742.03 252.46M546.15 134.43L746.19 250.05M550.31 132.02L750.36 247.65M554.48 129.61L754.52 245.24M558.64 127.21L758.68 242.83M562.80 124.80L762.84 240.42" stroke="#000014" stroke-width="1.5" stroke-linecap="round" stroke-dasharray="0 4.8126" fill="none"/>
</svg>
<!-- legend -->
<div class="t" style="left:363.4px;top:240.9px;font-size:9.05px;color:#5c6b79">Top D1 reinf. area [mm<span style="font-size:6.6px;position:relative;top:-3.2px">2</span>/m]</div>
<div class="a" style="left:363px;top:263.75px;width:15px;height:117.75px;background:linear-gradient(#ff0000 0 11.11%,#ff8000 11.11% 22.22%,#ffff00 22.22% 33.33%,#80ff00 33.33% 44.44%,#00ff00 44.44% 55.55%,#00ff80 55.55% 66.66%,#00ffff 66.66% 77.77%,#0080ff 77.77% 88.88%,#0000ff 88.88% 100%)"></div>
<div class="t lv" style="top:259.6px">4381.03062</div>
<div class="t lv" style="top:272.7px">3894.24944</div>
<div class="t lv" style="top:285.8px">3407.46826</div>
<div class="t lv" style="top:298.9px">2920.68708</div>
<div class="t lv" style="top:312.0px">2433.90590</div>
<div class="t lv" style="top:325.0px">1947.12472</div>
<div class="t lv" style="top:338.0px">1460.34354</div>
<div class="t lv" style="top:351.4px">973.56236</div>
<div class="t lv" style="top:364.5px">486.78118</div>
<div class="t lv" style="top:377.5px">0.00000</div>

<!-- toolbar icons -->
<div class="a ic" style="top:63.3px;background:#2484c6"></div>
<div class="a ic" style="top:83.2px;background:#2484c6"></div>
<div class="a ic" style="top:103px"></div>
<div class="a ic" style="top:123px"></div>
<div class="a ic" style="top:143px"></div>
<div class="a ic" style="top:163px"></div>
<div class="a ic" style="top:183px"></div>
<div class="a ic" style="top:202.8px;background:#e0442f"></div>
<div class="a ic" style="top:230.7px"></div>
<div class="a ic" style="top:250.7px"></div>
<div class="a ic" style="top:271px"></div>
<svg class="a" style="left:355.7px;top:63px" width="16" height="224" viewBox="356 63 16 224">
 <path d="M362.500 68.200v5.200l1.300-1.100 1 2.100.9-.4-.9-2 1.800-.1Z" fill="none" stroke="#fff" stroke-width=".85" stroke-linejoin="round"/>
 <rect x="361.300" y="88.600" width="5.400" height="5.200" fill="#fff" fill-opacity=".3" stroke="#fff" stroke-width=".9"/>
 <path d="M366.300 110.300A2.500 2.500 0 1 0 366.400 112.200" fill="none" stroke="#50555a" stroke-width=".8"/><path d="M367 108.400v2.400h-2.400Z" fill="#50555a"/>
 <path d="M361.500 128.500h5v5h-5zM361.500 128.500l5 5" fill="none" stroke="#6a6f73" stroke-width=".7" stroke-dasharray="1.200 .6"/>
 <path d="M361 149.700h6M361 152.300h6" fill="none" stroke="#33383c" stroke-width=".9"/><path d="M365.300 148.100l2 1.600h-2ZM362.700 153.900l-2-1.600h2Z" fill="#33383c"/>
 <path d="M361 170.600l3-2.600v1.600c2.200 0 3.300 1.300 3.300 3.600c-.7-1.400-1.700-1.900-3.300-1.900v1.800Z" fill="#33383c"/>
 <path d="M360.800 188.800h2.800v1.200h-2.800zM364.400 188.800h2.800v1.200h-2.800zM360.800 191.200h2.800v2.200h-2.800zM364.400 191.200h2.800v2.200h-2.800z" fill="#c4c7ca"/>
 <circle cx="364" cy="211" r="2.400" fill="none" stroke="#fff" stroke-width=".9"/><circle cx="364" cy="211" r=".8" fill="#fff"/>
 <path d="M361.300 236.500h5.400v4.600h-5.400z" fill="none" stroke="#8a8f93" stroke-width=".7"/><path d="M364.300 236.500h2.400v1.600h-2.400z" fill="#50555a"/>
 <path d="M361.800 256.600h1.800v1.800h-1.800zM364.400 256.600h1.800v1.800h-1.800zM361.800 259.200h1.800v1.800h-1.800zM364.400 259.200h1.800v1.800h-1.800z" fill="#777c80"/>
 <path d="M360.500 279c1.800-2.500 5.200-2.500 7 0c-1.800 2.500-5.200 2.500-7 0Z" fill="none" stroke="#5a5f63" stroke-width=".8"/><circle cx="364" cy="279" r="1.100" fill="#5a5f63"/>
</svg>

<!-- chat bubble -->
<div class="a" style="left:755.5px;top:360.7px;width:35px;height:35px;border-radius:50%;background:#1f88e0;box-shadow:0 1px 4px rgba(0,0,0,.25)"></div>
<svg class="a" style="left:755px;top:360.2px" width="36" height="36" viewBox="0 0 36 36">
 <path d="M11.500 9.500h13a2 2 0 0 1 2 2v15.500l-3.800-2.800H11.500a2 2 0 0 1-2-2V11.500a2 2 0 0 1 2-2Z" fill="#fff"/>
 <path d="M12.800 18.600c3 2.600 7.400 2.600 10.400 0" fill="none" stroke="#1f88e0" stroke-width="1.300" stroke-linecap="round"/>
</svg>

<!-- bottom bar -->
<div class="a" style="left:0;top:415px;width:800px;height:17px;background:#1f2735;border-top:1px solid #161c28"></div>
<div class="a" style="left:649.2px;top:415.5px;width:35.3px;height:16.5px;background:#26324a"></div>
<div class="a" style="left:686.2px;top:415.5px;width:114px;height:16.5px;background:#26324a"></div>
<div class="t" style="left:655.500px;top:419.6px;font-size:7.8px;letter-spacing:.2px;color:#e4e7ea">Metric</div>
<div class="t" style="left:692.500px;top:419.7px;font-size:7.5px;color:#e4e7ea">Building_Two_Way_Slab_EN2*</div>
<div class="a" style="left:26.5px;top:430.500px;width:202px;height:1.500px;background:#8a9199"></div>
</body></html>
